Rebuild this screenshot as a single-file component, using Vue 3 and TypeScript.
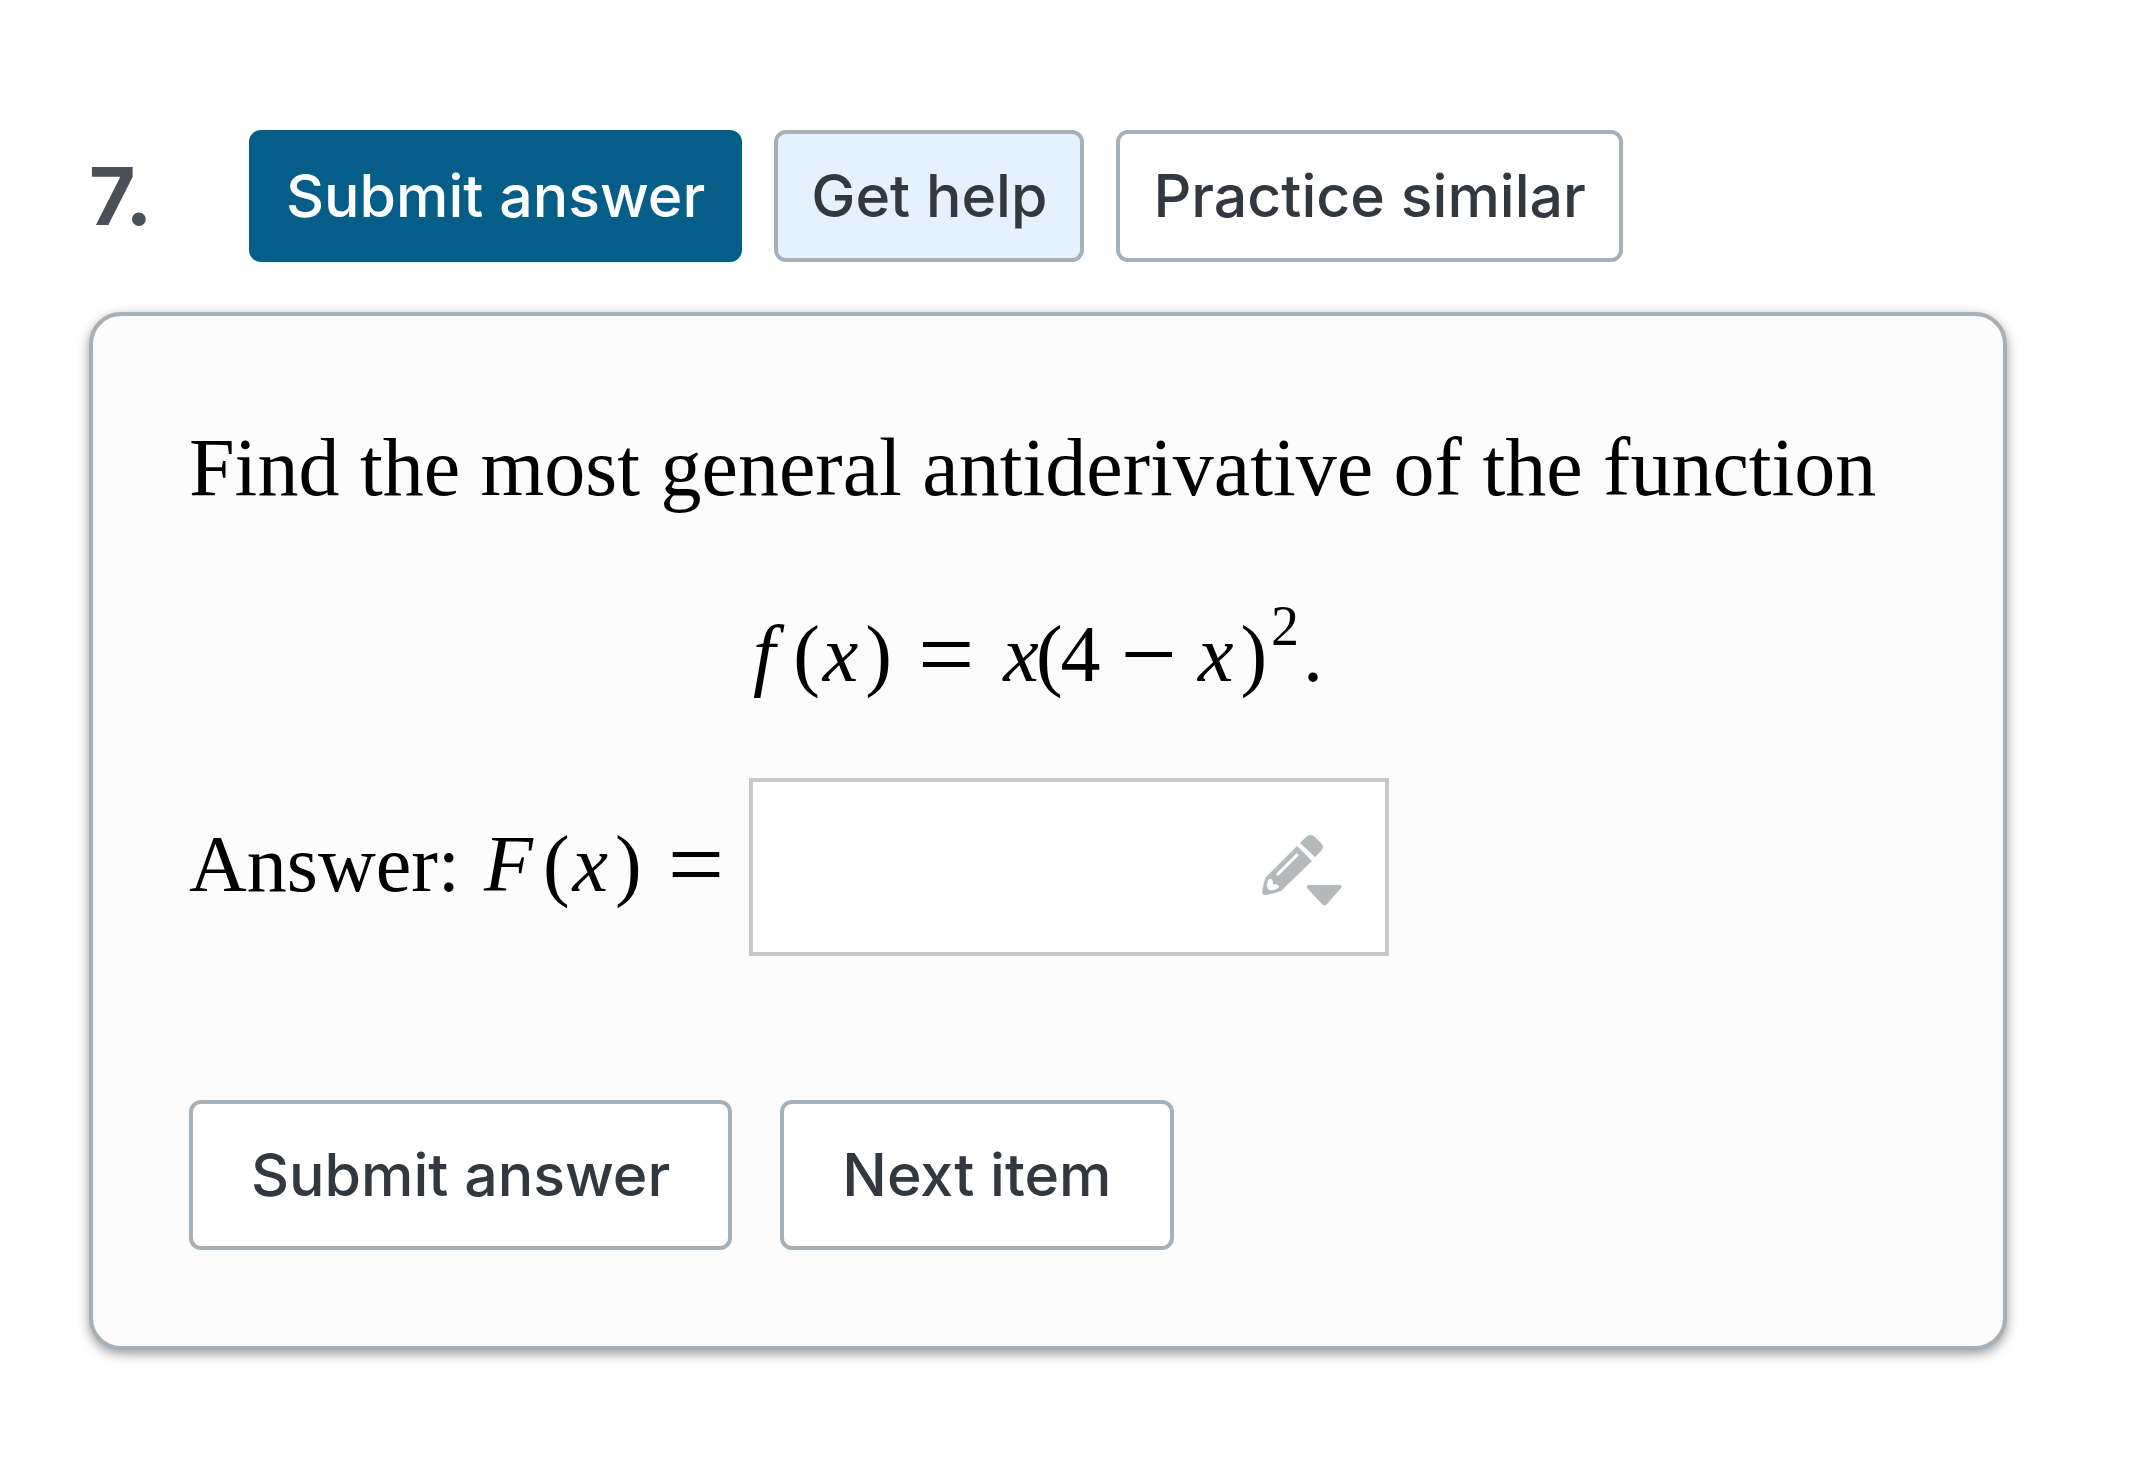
<script setup lang="ts">
import { ref } from 'vue'

const answer = ref('')
</script>

<template>
  <main class="page">
    <header class="toolbar">
      <h1 class="number">7.</h1>
      <div class="actions">
        <button type="button" class="btn primary">Submit answer</button>
        <button type="button" class="btn help">Get help</button>
        <button type="button" class="btn">Practice similar</button>
      </div>
    </header>

    <section class="card">
      <p class="prompt">Find the most general antiderivative of the function</p>

      <p class="formula math">
        <i class="func">f</i><span>(</span><i>x</i><span>)</span><span class="rel">=</span><i>x</i><span class="tight">(</span><span>4</span><span class="op">−</span><i>x</i><span>)</span><sup>2</sup><span>.</span>
      </p>

      <div class="answer-row">
        <label for="answer" class="answer-label">Answer:
          <span class="math"><i class="func">F</i><span>(</span><i>x</i><span>)</span><span class="rel">=</span></span>
        </label>
        <div class="field">
          <input id="answer" v-model="answer" type="text" autocomplete="off" />
          <button type="button" class="editor" aria-label="Open equation editor">
            <svg viewBox="0 0 82 74" aria-hidden="true">
              <path d="M35 13 50 28 19 58Q11 61 3 62Q0 62 0 59Q1 51 4 44Z" fill="#b3babc" />
              <path d="M38 10 44 4Q48 0 53 4L59 10Q63 14 59 18L53 24Z" fill="#b3babc" />
              <path d="M35 22 16 41" stroke="#fff" stroke-width="3" stroke-linecap="round" />
              <path d="M7 46Q11 45 11 51Q17 51 17 54Q13 58 7 57Q3 53 7 46Z" fill="#fff" />
              <path d="M47 52H78Q81 53 79 55L65 71Q63 74 60 71L45 55Q44 52 47 52Z" fill="#b3babc" />
            </svg>
          </button>
        </div>
      </div>

      <div class="footer-actions">
        <button type="button" class="btn large">Submit answer</button>
        <button type="button" class="btn large">Next item</button>
      </div>
    </section>
  </main>
</template>

<style>
body {
  margin: 0;
  background: #fff;
}
</style>

<style scoped>
.page {
  box-sizing: border-box;
  padding: 130px 138px 120px 89px;
  font-family: Inter, sans-serif;
}

.toolbar {
  display: flex;
  align-items: center;
}

.number {
  width: 160px;
  margin: 0;
  font-size: 80px;
  line-height: 132px;
  font-weight: 700;
  color: #495059;
}

.actions {
  display: flex;
  gap: 32px;
}

.btn {
  box-sizing: border-box;
  height: 132px;
  padding: 0 33px;
  border: 4px solid #a5b0b9;
  border-radius: 12px;
  background: #fff;
  color: #31383f;
  font: 500 59px/80px Inter, sans-serif;
  white-space: nowrap;
}

.btn.primary {
  border-color: #045e87;
  background: #045e87;
  color: #fff;
}

.btn.help {
  background: #e5f1ff;
}

.btn.large {
  height: 150px;
  padding: 0 58px;
}

.card {
  margin-top: 50px;
  padding: 92px 96px 96px;
  border: 4px solid #a5b0b9;
  border-radius: 32px;
  background: #fcfcfc;
  box-shadow: 0 4px 12px rgba(0, 0, 0, 0.4);
  color: #000;
  font-family: "Liberation Serif", serif;
}

.prompt {
  margin: 0;
  font-size: 82px;
  line-height: 120px;
  white-space: nowrap;
}

.formula {
  display: flex;
  align-items: baseline;
  justify-content: center;
  margin: 66px 0 0;
  padding-right: 24px;
  font-size: 80px;
  line-height: 120px;
}

.math i {
  margin: 0 7px 0 3px;
}

.math .func {
  margin: 0 10px 0 4px;
}

.formula .func {
  margin-right: 18px;
}

.rel,
.op {
  position: relative;
  top: 7px;
  font-size: 100px;
  line-height: 80px;
}

.rel {
  margin: 0 26px;
}

.op {
  margin: 0 18px 0 20px;
}

.tight {
  margin: 0 -2px 0 -10px;
}

.formula sup {
  position: relative;
  top: -36px;
  margin: 0 4px;
  font-size: 56px;
  line-height: 1;
  vertical-align: baseline;
}

.answer-row {
  display: flex;
  align-items: center;
  margin-top: 64px;
}

.answer-label {
  width: 560px;
  padding-bottom: 6px;
  font-size: 80px;
  line-height: 120px;
  white-space: nowrap;
}

.field {
  box-sizing: border-box;
  display: flex;
  align-items: center;
  width: 640px;
  height: 178px;
  border: 4px solid #c8c8c8;
  background: #fff;
}

.field input {
  flex: 1;
  min-width: 0;
  height: 100%;
  box-sizing: border-box;
  padding: 0 24px;
  border: 0;
  outline: 0;
  background: transparent;
  font: 72px "Liberation Serif", serif;
}

.editor {
  width: 82px;
  height: 74px;
  margin: 6px 41px 0 0;
  padding: 0;
  border: 0;
  background: none;
}

.editor svg {
  display: block;
  width: 82px;
  height: 74px;
  fill: none;
}

.footer-actions {
  display: flex;
  gap: 48px;
  margin-top: 144px;
}
</style>
